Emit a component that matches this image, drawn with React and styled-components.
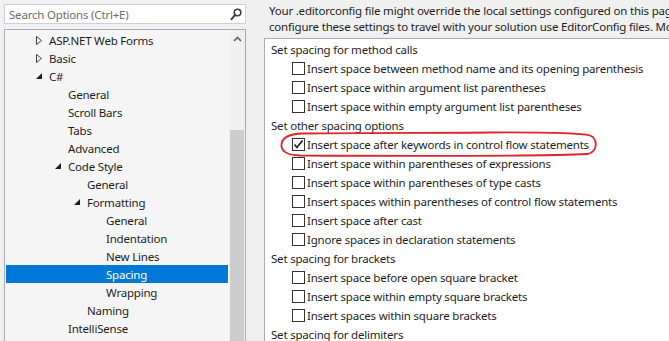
import React from "react";
import styled, { createGlobalStyle } from "styled-components";

const GlobalStyle = createGlobalStyle`
  html, body { margin: 0; padding: 0; background: #f0f0f0; overflow: hidden; }
  body { font-family: "Noto Sans", "Open Sans", sans-serif; font-size: 11.5px; letter-spacing: -0.2px; color: #1e1e1e; }
`;

const Page = styled.div`
  display: flex;
  width: 669px;
  height: 341px;
  overflow: hidden;
`;

const Sidebar = styled.div`
  width: 242px;
  margin-left: 4px;
  padding-top: 4px;
  display: flex;
  flex-direction: column;
  gap: 5px;
  flex-shrink: 0;
`;

const SearchBox = styled.div`
  height: 20px;
  flex-shrink: 0;
  box-sizing: border-box;
  border: 1px solid #cccedb;
  background: #fff;
  display: flex;
  align-items: center;
  justify-content: space-between;
  padding: 0 3px 0 4px;
  color: #6d6d6d;
`;

const Tree = styled.div`
  flex: 1;
  border: 1px solid #a9abb4;
  border-bottom: none;
  background: #f5f5f5;
  display: flex;
  min-height: 0;
  overflow: hidden;
`;

const TreeList = styled.div`
  flex: 1;
  padding: 1px 1px 0 1px;
`;

const Item = styled.div`
  height: 18px;
  display: flex;
  align-items: center;
  padding-left: ${(p) => 29 + p.$level * 19}px;
  background: ${(p) => (p.$selected ? "#0078d7" : "transparent")};
  color: ${(p) => (p.$selected ? "#fff" : "#1e1e1e")};
  white-space: nowrap;
`;

const Arrow = styled.span`
  width: 14px;
  height: 18px;
  display: flex;
  align-items: center;
  flex-shrink: 0;
`;

const Scrollbar = styled.div`
  width: 16px;
  background: #f0f0f0;
  display: flex;
  flex-direction: column;
  align-items: center;
`;

const ScrollButton = styled.div`
  height: 17px;
  width: 100%;
  display: flex;
  align-items: center;
  justify-content: center;
`;

const ScrollTrack = styled.div`
  flex: 1;
  width: 100%;
  padding-top: 83px;
  box-sizing: border-box;
  display: flex;
`;

const Thumb = styled.div`
  flex: 1;
  margin: 0 1px;
  background: #cdcdcd;
`;

const Main = styled.div`
  flex: 1;
  margin-left: 18px;
  display: flex;
  flex-direction: column;
  min-width: 0;
  overflow: hidden;
`;

const Description = styled.div`
  flex-shrink: 0;
  padding: 3px 0 0 5px;
  line-height: 16px;
  white-space: nowrap;
  overflow: hidden;
`;

const OptionsBox = styled.div`
  margin-top: 3px;
  flex: 1;
  min-height: 0;
  overflow: hidden;
  background: #fff;
  border: 1px solid #adadad;
  border-right: none;
  border-bottom: none;
  padding-top: 1px;
`;

const Row = styled.div`
  position: relative;
  height: 19px;
  display: flex;
  align-items: center;
  padding-left: ${(p) => (p.$option ? 27 : 6)}px;
  white-space: nowrap;
`;

const Box = styled.span`
  width: 13px;
  height: 13px;
  box-sizing: border-box;
  border: 1px solid #333;
  background: #fff;
  margin-right: 2px;
  display: flex;
  align-items: center;
  justify-content: center;
  flex-shrink: 0;
`;

const Highlight = styled.svg`
  position: absolute;
  left: 15px;
  top: -3px;
  overflow: visible;
  pointer-events: none;
`;

const tree = [
  { label: "ASP.NET Web Forms", level: 0, arrow: "closed" },
  { label: "Basic", level: 0, arrow: "closed" },
  { label: "C#", level: 0, arrow: "open" },
  { label: "General", level: 1 },
  { label: "Scroll Bars", level: 1 },
  { label: "Tabs", level: 1 },
  { label: "Advanced", level: 1 },
  { label: "Code Style", level: 1, arrow: "open" },
  { label: "General", level: 2 },
  { label: "Formatting", level: 2, arrow: "open" },
  { label: "General", level: 3 },
  { label: "Indentation", level: 3 },
  { label: "New Lines", level: 3 },
  { label: "Spacing", level: 3, selected: true },
  { label: "Wrapping", level: 3 },
  { label: "Naming", level: 2 },
  { label: "IntelliSense", level: 1 },
];

const options = [
  { header: "Set spacing for method calls" },
  { label: "Insert space between method name and its opening parenthesis" },
  { label: "Insert space within argument list parentheses" },
  { label: "Insert space within empty argument list parentheses" },
  { header: "Set other spacing options" },
  { label: "Insert space after keywords in control flow statements", checked: true, circled: true },
  { label: "Insert space within parentheses of expressions" },
  { label: "Insert space within parentheses of type casts" },
  { label: "Insert spaces within parentheses of control flow statements" },
  { label: "Insert space after cast" },
  { label: "Ignore spaces in declaration statements" },
  { header: "Set spacing for brackets" },
  { label: "Insert space before open square bracket" },
  { label: "Insert space within empty square brackets" },
  { label: "Insert spaces within square brackets" },
  { header: "Set spacing for delimiters" },
];

function TreeArrow({ type }) {
  if (type === "closed") {
    return (
      <svg width="8" height="9" viewBox="0 0 8 9">
        <path d="M1.5 0.5 L6.5 4.5 L1.5 8.5 Z" fill="none" stroke="#404040" strokeWidth="1" />
      </svg>
    );
  }
  if (type === "open") {
    return (
      <svg width="8" height="8" viewBox="0 0 8 8">
        <path d="M7 1 L7 7 L1 7 Z" fill="#1e1e1e" />
      </svg>
    );
  }
  return null;
}

function SearchIcon() {
  return (
    <svg width="12" height="13" viewBox="0 0 12 13">
      <circle cx="7.5" cy="4.5" r="3.3" fill="none" stroke="#3c3c3c" strokeWidth="1.6" />
      <path d="M5.2 6.9 L1.5 11.2" stroke="#3c3c3c" strokeWidth="2" strokeLinecap="round" />
    </svg>
  );
}

function Check() {
  return (
    <svg width="11" height="11" viewBox="0 0 11 11">
      <path d="M1.5 5.5 L4 8.5 L9.5 1.5" fill="none" stroke="#1e1e1e" strokeWidth="1.6" />
    </svg>
  );
}

export default function App() {
  return (
    <>
      <GlobalStyle />
      <Page>
        <Sidebar>
          <SearchBox>
            <span>Search Options (Ctrl+E)</span>
            <SearchIcon />
          </SearchBox>
          <Tree>
            <TreeList>
              {tree.map((t, i) => (
                <Item key={i} $level={t.level} $selected={t.selected}>
                  <Arrow>{t.arrow && <TreeArrow type={t.arrow} />}</Arrow>
                  {t.label}
                </Item>
              ))}
            </TreeList>
            <Scrollbar>
              <ScrollButton>
                <svg width="9" height="6" viewBox="0 0 9 6">
                  <path d="M1 5 L4.5 1.5 L8 5" fill="none" stroke="#606060" strokeWidth="1.6" />
                </svg>
              </ScrollButton>
              <ScrollTrack>
                <Thumb />
              </ScrollTrack>
            </Scrollbar>
          </Tree>
        </Sidebar>
        <Main>
          <Description>
            Your .editorconfig file might override the local settings configured on this page which only apply to your machine. To
            <br />
            configure these settings to travel with your solution use EditorConfig files. More info
          </Description>
          <OptionsBox>
            {options.map((o, i) =>
              o.header ? (
                <Row key={i}>{o.header}</Row>
              ) : (
                <Row key={i} $option>
                  <Box>{o.checked && <Check />}</Box>
                  {o.label}
                  {o.circled && (
                    <Highlight width="318" height="25" viewBox="0 0 318 25">
                      <path
                        d="M22 1.5 C90 0.5 150 1 210 0.5 C260 0.3 300 1 310 3.5 C318 7 318 19 308 22 C260 24.5 120 24 20 23.5 C5 23 1 18 1.5 12.5 C2 6 8 2 22 1.5 Z"
                        fill="none"
                        stroke="#e0222a"
                        strokeWidth="1.8"
                      />
                    </Highlight>
                  )}
                </Row>
              )
            )}
          </OptionsBox>
        </Main>
      </Page>
    </>
  );
}
